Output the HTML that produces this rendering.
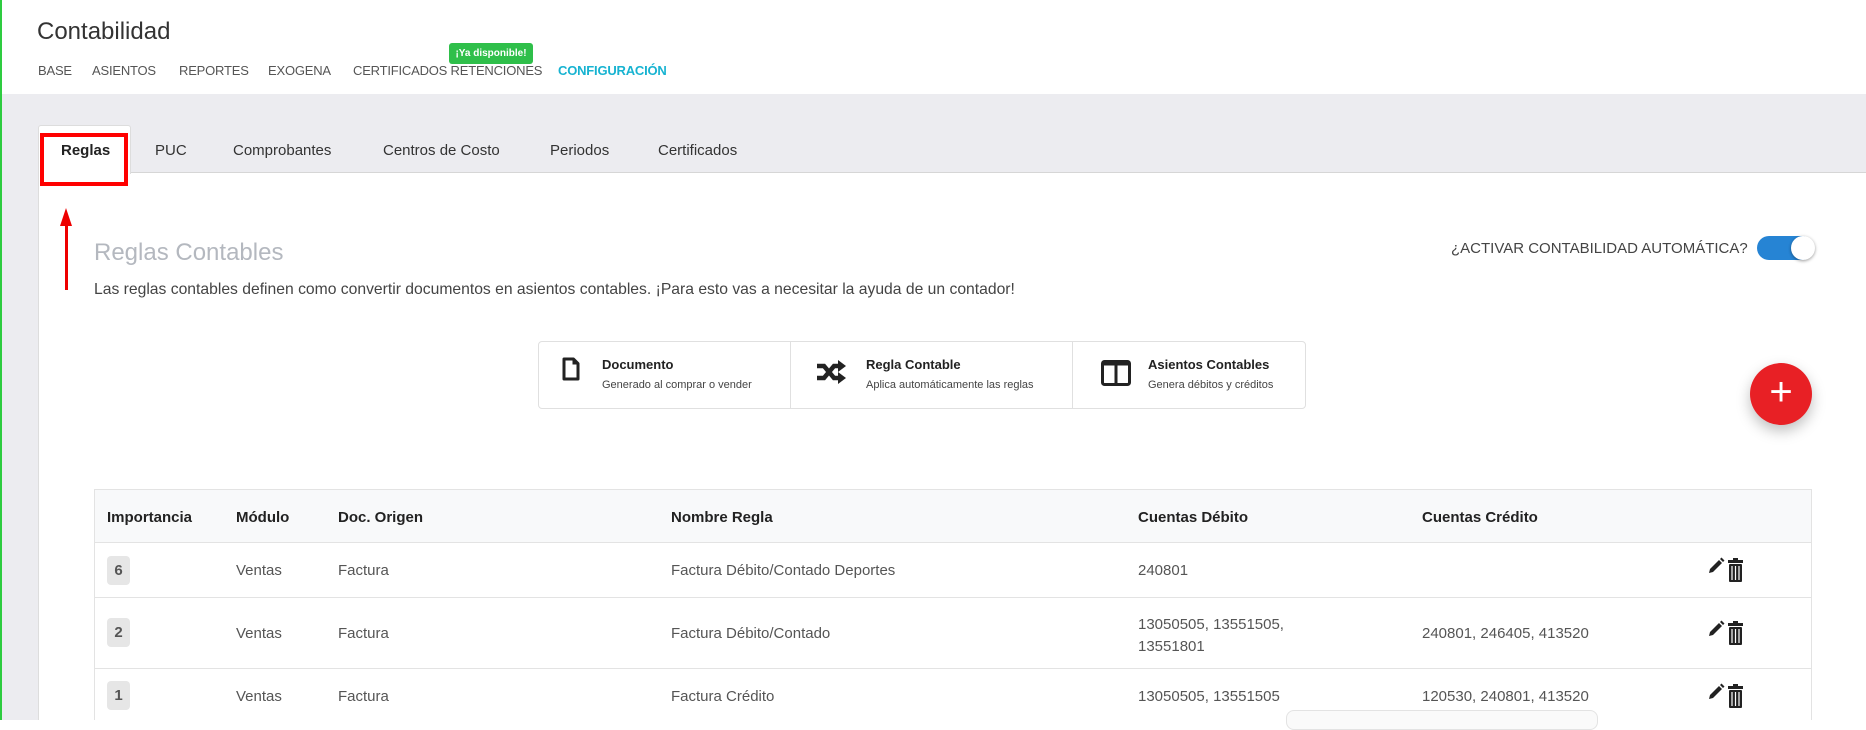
<!DOCTYPE html>
<html><head><meta charset="utf-8"><style>
*{margin:0;padding:0;box-sizing:border-box}
body{width:1866px;height:720px;overflow:hidden;background:#fff;font-family:"Liberation Sans",sans-serif;color:#333;position:relative}
.a{position:absolute;white-space:nowrap}
.nav{top:63px;font-size:13px;color:#555;letter-spacing:-0.2px}
.tab{top:142px;font-size:15px;color:#333}
.th{top:509px;font-size:15px;font-weight:bold;color:#222}
.td{font-size:15px;color:#555}
.badge{position:absolute;left:107px;width:23px;height:29px;background:#e6e6e6;border-radius:4px;font-size:15px;color:#555;text-align:center;line-height:29px;font-weight:bold}
.hl{position:absolute;left:94px;width:1718px;height:1px;background:#e3e3e3}
</style></head><body>
<div class="a" style="left:0;top:0;width:2px;height:720px;background:#2ecc40;z-index:5"></div>
<div class="a" style="left:37px;top:18px;font-size:24px;color:#333">Contabilidad</div>
<div class="a nav" style="left:38px">BASE</div>
<div class="a nav" style="left:92px">ASIENTOS</div>
<div class="a nav" style="left:179px">REPORTES</div>
<div class="a nav" style="left:268px">EXOGENA</div>
<div class="a nav" style="left:353px">CERTIFICADOS RETENCIONES</div>
<div class="a nav" style="left:558px;color:#17b3d1;font-weight:bold">CONFIGURACIÓN</div>
<div class="a" style="left:449px;top:43px;width:84px;height:21px;background:#2fbf4a;border-radius:3px;color:#fff;font-size:10px;font-weight:bold;text-align:center;line-height:21px">¡Ya disponible!</div>
<div class="a" style="left:0;top:94px;width:1866px;height:626px;background:#ececf0"></div>
<div class="a" style="left:38px;top:172px;width:1828px;height:548px;background:#fff;border-left:1px solid #ddd;border-top:1px solid #d6d6d6"></div>
<div class="a" style="left:38px;top:125px;width:93px;height:49px;background:#fff;border:1px solid #ddd;border-bottom:none;border-radius:3px 3px 0 0"></div>
<div class="a tab" style="left:61px;font-weight:bold;color:#222">Reglas</div>
<div class="a tab" style="left:155px">PUC</div>
<div class="a tab" style="left:233px">Comprobantes</div>
<div class="a tab" style="left:383px">Centros de Costo</div>
<div class="a tab" style="left:550px">Periodos</div>
<div class="a tab" style="left:658px">Certificados</div>
<div class="a" style="left:40px;top:133px;width:88px;height:53px;border:4px solid #f00"></div>
<div class="a" style="left:65px;top:222px;width:3px;height:68px;background:#e00"></div>
<div class="a" style="left:60px;top:208px;width:0;height:0;border-left:6px solid transparent;border-right:6px solid transparent;border-bottom:18px solid #e00"></div>
<div class="a" style="left:94px;top:239px;font-size:24px;color:#b4b8bf">Reglas Contables</div>
<div class="a" style="left:94px;top:281px;font-size:15.7px;color:#444">Las reglas contables definen como convertir documentos en asientos contables. ¡Para esto vas a necesitar la ayuda de un contador!</div>
<div class="a" style="left:1451px;top:240px;font-size:15px;color:#444">¿ACTIVAR CONTABILIDAD AUTOMÁTICA?</div>
<div class="a" style="left:1757px;top:236px;width:57px;height:24px;background:#2684d4;border-radius:12px"></div>
<div class="a" style="left:1791px;top:236px;width:24px;height:24px;background:#fff;border-radius:12px;box-shadow:0 1px 3px rgba(0,0,0,.4)"></div>
<div class="a" style="left:538px;top:341px;width:768px;height:68px;border:1px solid #e0e0e0;border-radius:4px;background:#fff"></div>
<div class="a" style="left:790px;top:342px;width:1px;height:66px;background:#e0e0e0"></div>
<div class="a" style="left:1072px;top:342px;width:1px;height:66px;background:#e0e0e0"></div>
<svg class="a" style="left:562px;top:357px" width="18" height="24" viewBox="0 0 18 24"><path d="M2 2h9.5l4.5 4.5V22H2z" fill="none" stroke="#222" stroke-width="3" stroke-linejoin="round"/><path d="M10.5 1.5v6h6" fill="#222"/></svg>
<svg class="a" style="left:816px;top:360px" width="32" height="24" viewBox="0 0 32 24"><path d="M1 6h7l10 12h5M1 18h7l10-12h5" fill="none" stroke="#222" stroke-width="4.5"/><path d="M22 0l8 6-8 6zM22 12l8 6-8 6z" fill="#222"/></svg>
<svg class="a" style="left:1101px;top:360px" width="30" height="26" viewBox="0 0 30 26"><rect x="1.5" y="1.5" width="27" height="23" rx="2" fill="none" stroke="#222" stroke-width="3"/><rect x="1.5" y="1.5" width="27" height="4" fill="#222"/><rect x="13.5" y="2" width="3" height="22" fill="#222"/></svg>
<div class="a" style="left:602px;top:357px;font-size:13px;font-weight:bold;color:#222">Documento</div>
<div class="a" style="left:602px;top:379px;font-size:11px;color:#444">Generado al comprar o vender</div>
<div class="a" style="left:866px;top:357px;font-size:13px;font-weight:bold;color:#222">Regla Contable</div>
<div class="a" style="left:866px;top:379px;font-size:11px;color:#444">Aplica automáticamente las reglas</div>
<div class="a" style="left:1148px;top:357px;font-size:13px;font-weight:bold;color:#222">Asientos Contables</div>
<div class="a" style="left:1148px;top:379px;font-size:11px;color:#444">Genera débitos y créditos</div>
<div class="a" style="left:1750px;top:363px;width:62px;height:62px;border-radius:50%;background:#e82025;box-shadow:0 6px 14px rgba(0,0,0,.25);color:#fff;font-size:40px;text-align:center;line-height:58px;font-weight:300">+</div>
<div class="a" style="left:94px;top:489px;width:1718px;height:231px;border:1px solid #e3e3e3;border-bottom:none"></div>
<div class="a" style="left:95px;top:490px;width:1716px;height:52px;background:#f8f9fa"></div>
<div class="hl" style="top:542px"></div>
<div class="hl" style="top:597px"></div>
<div class="hl" style="top:668px"></div>
<div class="a th" style="left:107px">Importancia</div>
<div class="a th" style="left:236px">Módulo</div>
<div class="a th" style="left:338px">Doc. Origen</div>
<div class="a th" style="left:671px">Nombre Regla</div>
<div class="a th" style="left:1138px">Cuentas Débito</div>
<div class="a th" style="left:1422px">Cuentas Crédito</div>
<div class="badge" style="top:556px">6</div>
<div class="badge" style="top:618px">2</div>
<div class="badge" style="top:681px">1</div>
<div class="a td" style="left:236px;top:562px">Ventas</div><div class="a td" style="left:338px;top:562px">Factura</div><div class="a td" style="left:671px;top:562px">Factura Débito/Contado Deportes</div><div class="a td" style="left:1138px;top:562px">240801</div>
<div class="a td" style="left:236px;top:625px">Ventas</div><div class="a td" style="left:338px;top:625px">Factura</div><div class="a td" style="left:671px;top:625px">Factura Débito/Contado</div><div class="a td" style="left:1138px;top:614px;line-height:22px">13050505, 13551505,<br>13551801</div><div class="a td" style="left:1422px;top:625px">240801, 246405, 413520</div>
<div class="a td" style="left:236px;top:688px">Ventas</div><div class="a td" style="left:338px;top:688px">Factura</div><div class="a td" style="left:671px;top:688px">Factura Crédito</div><div class="a td" style="left:1138px;top:688px">13050505, 13551505</div><div class="a td" style="left:1422px;top:688px">120530, 240801, 413520</div>
<svg width="0" height="0" style="position:absolute"><defs>
<g id="ic"><path d="M2 16l1-4 9-9 3 3-9 9z M13 2l1.5-1.5 3 3L16 5z" fill="#222"/><path d="M26 1h5v2h5v3H21V3h5z" fill="#222"/><rect x="22" y="7" width="13" height="18" rx="1" fill="#222"/><path d="M25 9v14M28.5 9v14M32 9v14" stroke="#fff" stroke-width="1.2"/></g></defs></svg>
<svg class="a" style="left:1707px;top:557px" width="46" height="27"><use href="#ic"/></svg>
<svg class="a" style="left:1707px;top:620px" width="46" height="27"><use href="#ic"/></svg>
<svg class="a" style="left:1707px;top:683px" width="46" height="27"><use href="#ic"/></svg>
<div class="a" style="left:1286px;top:710px;width:312px;height:20px;border:1px solid #e3e3e3;border-radius:8px;background:#fafafa"></div>
</body></html>
